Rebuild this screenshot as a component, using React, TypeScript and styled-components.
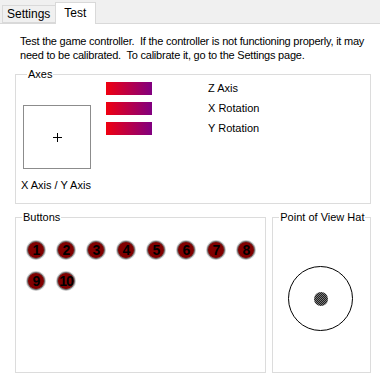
import React from 'react';
import styled, { createGlobalStyle } from 'styled-components';

const GlobalStyle = createGlobalStyle`
  html, body {
    margin: 0;
    padding: 0;
    background: #f0f0f0;
  }
  body {
    font-family: Tahoma, "Liberation Sans", Arial, sans-serif;
    font-size: 11px;
    color: #000;
  }
`;

const Dialog = styled.div`
  width: 380px;
  height: 379px;
  display: flex;
  flex-direction: column;
  overflow: hidden;
`;

const TabStrip = styled.div`
  height: 23px;
  display: flex;
  align-items: flex-end;
  padding-left: 2px;
  box-sizing: border-box;
  background: #f0f0f0;
  position: relative;
  z-index: 1;
`;

const Tab = styled.div<{ $active?: boolean }>`
  box-sizing: border-box;
  height: ${(p) => (p.$active ? '22px' : '18px')};
  padding: ${(p) => (p.$active ? '1px 9px 0 8px' : '1px 5px 0 4px')};
  margin-bottom: ${(p) => (p.$active ? '-1px' : '0')};
  margin-left: ${(p) => (p.$active ? '-1px' : '0')};
  border: 1px solid #d9d9d9;
  border-bottom: ${(p) => (p.$active ? 'none' : '1px solid #d9d9d9')};
  background: ${(p) => (p.$active ? '#fff' : '#f0f0f0')};
  font-size: 12px;
  line-height: ${(p) => (p.$active ? '18px' : '15px')};
`;

const Page = styled.div`
  flex: 1;
  background: #fff;
  border-top: 1px solid #d9d9d9;
  padding: 10px 9px 0 15px;
  display: flex;
  flex-direction: column;
`;

const Intro = styled.p`
  margin: 0 0 6px 5px;
  line-height: 14px;
  letter-spacing: -0.22px;
  white-space: pre;
`;

const Group = styled.fieldset`
  margin: 0;
  padding: 0;
  border: 1px solid #dcdcdc;
  min-width: 0;
  position: relative;
`;

const Legend = styled.legend`
  margin-left: 6px;
  padding: 0 1px;
  line-height: 12px;
`;

const AxesGroup = styled(Group)`
  height: 136px;
  box-sizing: border-box;
  display: flex;
  padding: 0 0 0 5px;
`;

const XYColumn = styled.div`
  display: flex;
  flex-direction: column;
  padding-top: 25px;
`;

const XYBox = styled.div`
  width: 68px;
  height: 64px;
  box-sizing: border-box;
  border: 1px solid #8c8c8c;
  margin-left: 2px;
  display: flex;
  align-items: center;
  justify-content: center;
`;

const Cross = styled.div`
  width: 9px;
  height: 9px;
  background:
    linear-gradient(#000, #000) center / 9px 1px no-repeat,
    linear-gradient(#000, #000) center / 1px 9px no-repeat;
`;

const XYLabel = styled.div`
  margin-top: 10px;
  line-height: 12px;
`;

const AxisList = styled.div`
  display: flex;
  flex-direction: column;
  gap: 6px;
  padding-top: 1px;
  margin-left: 15px;
`;

const AxisRow = styled.div`
  display: flex;
  align-items: center;
  height: 14px;
`;

const AxisBar = styled.div`
  width: 46px;
  height: 13px;
  background: linear-gradient(to right, #f00010, #800080);
`;

const AxisName = styled.span`
  margin-left: 56px;
  line-height: 14px;
`;

const BottomRow = styled.div`
  display: flex;
  gap: 6px;
  margin-top: 7px;
`;

const ButtonsGroup = styled(Group)`
  width: 252px;
  height: 162px;
  box-sizing: border-box;
`;

const ButtonGrid = styled.div`
  display: grid;
  grid-template-columns: repeat(8, 18px);
  column-gap: 12px;
  row-gap: 13px;
  padding: 18px 0 0 11px;
`;

const Lamp = styled.div`
  width: 18px;
  height: 18px;
  box-sizing: border-box;
  border-radius: 50%;
  background: #800000;
  border: 1px solid #6e6e6e;
  box-shadow: 0 0 0 1px #c8c8c8;
  display: flex;
  align-items: center;
  justify-content: center;
  font-family: "Liberation Sans", Arial, sans-serif;
  font-weight: bold;
  font-size: 14px;
  letter-spacing: -1px;
  line-height: 1;
  color: #000;
`;

const PovGroup = styled(Group)`
  width: 99px;
  height: 162px;
  box-sizing: border-box;
  display: flex;
  justify-content: center;
`;

const PovRing = styled.div`
  width: 65px;
  height: 65px;
  box-sizing: border-box;
  margin-top: 43px;
  margin-left: -2px;
  border: 1px solid #000;
  border-radius: 50%;
  display: flex;
  align-items: center;
  justify-content: center;
`;

const PovDot = styled.div`
  width: 14px;
  height: 14px;
  border-radius: 50%;
  background: repeating-conic-gradient(#202020 0 25%, #7a7a7a 0 50%) 0 0 / 2px 2px;
`;

const axes = ['Z Axis', 'X Rotation', 'Y Rotation'];
const buttons = [1, 2, 3, 4, 5, 6, 7, 8, 9, 10];

export default function App() {
  return (
    <>
      <GlobalStyle />
      <Dialog>
        <TabStrip>
          <Tab>Settings</Tab>
          <Tab $active>Test</Tab>
        </TabStrip>
        <Page>
          <Intro>
            {'Test the game controller.  If the controller is not functioning properly, it may\nneed to be calibrated.  To calibrate it, go to the Settings page.'}
          </Intro>
          <AxesGroup>
            <Legend>Axes</Legend>
            <XYColumn>
              <XYBox>
                <Cross />
              </XYBox>
              <XYLabel>X Axis / Y Axis</XYLabel>
            </XYColumn>
            <AxisList>
              {axes.map((a) => (
                <AxisRow key={a}>
                  <AxisBar />
                  <AxisName>{a}</AxisName>
                </AxisRow>
              ))}
            </AxisList>
          </AxesGroup>
          <BottomRow>
            <ButtonsGroup>
              <Legend>Buttons</Legend>
              <ButtonGrid>
                {buttons.map((n) => (
                  <Lamp key={n}>{n}</Lamp>
                ))}
              </ButtonGrid>
            </ButtonsGroup>
            <PovGroup>
              <Legend>Point of View Hat</Legend>
              <PovRing>
                <PovDot />
              </PovRing>
            </PovGroup>
          </BottomRow>
        </Page>
      </Dialog>
    </>
  );
}
